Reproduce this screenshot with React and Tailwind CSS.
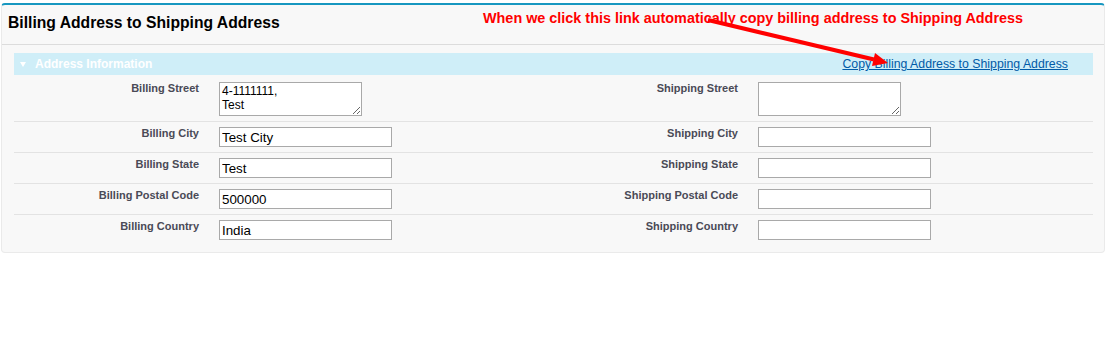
import React from 'react';

const rows = [
  { billing: 'Billing Street', bValue: '4-1111111,\nTest', shipping: 'Shipping Street', area: true },
  { billing: 'Billing City', bValue: 'Test City', shipping: 'Shipping City' },
  { billing: 'Billing State', bValue: 'Test', shipping: 'Shipping State' },
  { billing: 'Billing Postal Code', bValue: '500000', shipping: 'Shipping Postal Code' },
  { billing: 'Billing Country', bValue: 'India', shipping: 'Shipping Country' },
];

function Field({ value, area }) {
  if (area) {
    return (
      <textarea
        defaultValue={value}
        className="block w-[143px] h-[34px] border border-[#a9a9a9] bg-white px-[2px] py-[2px] text-[12px] leading-[13.5px] text-black outline-none"
      />
    );
  }
  return (
    <input
      type="text"
      defaultValue={value}
      className="block w-[173px] h-[20px] border border-[#a9a9a9] bg-white px-[2px] text-[13.33px] text-black outline-none"
    />
  );
}

export default function App() {
  return (
    <div className="relative min-h-[349px] bg-white pt-[3px] pl-px font-['Liberation_Sans',Arial,sans-serif]">
      <div className="w-[1104px] rounded-[4px] border-t-2 border-x border-b border-t-[#1797c0] border-x-[#eaeaea] border-b-[#eaeaea] bg-[#f8f8f8] pb-[6px]">
        <div className="h-[40px] border-b border-[#dcdcdc] pl-[6px] pt-[10px]">
          <h2 className="text-[15.7px] leading-[16px] font-bold text-black">Billing Address to Shipping Address</h2>
        </div>

        <div className="ml-[12px] mr-[11px] mt-[8px]">
          <div className="flex h-[22px] items-center justify-between bg-[#cfeef8] pl-[6px] pr-[25px]">
            <div className="flex items-center">
              <svg width="6" height="5" viewBox="0 0 6 5" className="mr-[9px]">
                <polygon points="0,0 6,0 3,5" fill="#ffffff" />
              </svg>
              <span className="text-[12px] font-bold leading-[22px] text-white">Address Information</span>
            </div>
            <a href="#" className="text-[12.3px] leading-[22px] text-[#015ba7] underline">
              Copy Billing Address to Shipping Address
            </a>
          </div>

          {rows.map((r, i) => (
            <div
              key={r.billing}
              className={`grid grid-cols-[195px_345px_194px_1fr] ${i === 0 ? 'h-[47px] pt-[7px]' : 'h-[31px] pt-[5px]'} ${i < rows.length - 1 ? 'border-b border-[#e3e3e3]' : ''}`}
            >
              <div className="pr-[10px] text-right text-[11px] leading-[13px] font-bold text-[#4a4a56]">{r.billing}</div>
              <div className="pl-[10px]">
                <Field value={r.bValue} area={r.area} />
              </div>
              <div className="pr-[10px] text-right text-[11px] leading-[13px] font-bold text-[#4a4a56]">{r.shipping}</div>
              <div className="pl-[10px]">
                <Field value="" area={r.area} />
              </div>
            </div>
          ))}
        </div>
      </div>

      <p className="absolute left-[483px] top-[11px] text-[14.4px] leading-none font-bold text-[#ff0000]">
        When we click this link automatically copy billing address to Shipping Address
      </p>
      <svg className="pointer-events-none absolute left-0 top-0" width="1107" height="100">
        <line x1="708" y1="20" x2="874" y2="59.5" stroke="#ff0000" strokeWidth="4" />
        <polygon points="888,63 872,66 875,53" fill="#ff0000" />
      </svg>
    </div>
  );
}
